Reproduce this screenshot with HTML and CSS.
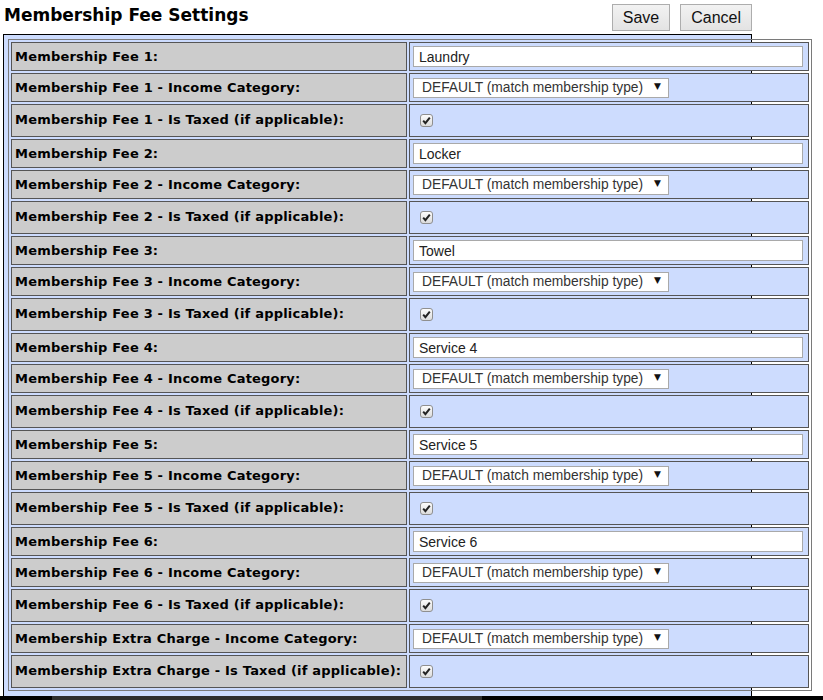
FILE: index.html
```html
<!DOCTYPE html>
<html lang="en">
<head>
    <meta charset="UTF-8">
    <title>Membership Fee Settings</title>
    <link rel="stylesheet" href="styles.css">
</head>
<body>
<div class="header">
    <h1>Membership Fee Settings</h1>
    <div class="buttons">
        <button type="button">Save</button>
        <button type="button">Cancel</button>
    </div>
</div>

<div class="panel">
    <table class="settings">
        <tr class="text-row">
            <td class="label">Membership Fee 1:</td>
            <td class="value"><input type="text" value="Laundry"></td>
        </tr>
        <tr class="text-row">
            <td class="label">Membership Fee 1 - Income Category:</td>
            <td class="value"><span class="select-wrap"><select><option>DEFAULT (match membership type)</option></select></span></td>
        </tr>
        <tr class="check-row">
            <td class="label">Membership Fee 1 - Is Taxed (if applicable):</td>
            <td class="value"><span class="checkbox"><svg viewBox="0 0 13 13" width="13" height="13"><path d="M3.2 6.6 L5.4 9.2 L9.8 3.6" fill="none" stroke="#222" stroke-width="2"/></svg></span></td>
        </tr>

        <tr class="text-row">
            <td class="label">Membership Fee 2:</td>
            <td class="value"><input type="text" value="Locker"></td>
        </tr>
        <tr class="text-row">
            <td class="label">Membership Fee 2 - Income Category:</td>
            <td class="value"><span class="select-wrap"><select><option>DEFAULT (match membership type)</option></select></span></td>
        </tr>
        <tr class="check-row">
            <td class="label">Membership Fee 2 - Is Taxed (if applicable):</td>
            <td class="value"><span class="checkbox"><svg viewBox="0 0 13 13" width="13" height="13"><path d="M3.2 6.6 L5.4 9.2 L9.8 3.6" fill="none" stroke="#222" stroke-width="2"/></svg></span></td>
        </tr>

        <tr class="text-row">
            <td class="label">Membership Fee 3:</td>
            <td class="value"><input type="text" value="Towel"></td>
        </tr>
        <tr class="text-row">
            <td class="label">Membership Fee 3 - Income Category:</td>
            <td class="value"><span class="select-wrap"><select><option>DEFAULT (match membership type)</option></select></span></td>
        </tr>
        <tr class="check-row">
            <td class="label">Membership Fee 3 - Is Taxed (if applicable):</td>
            <td class="value"><span class="checkbox"><svg viewBox="0 0 13 13" width="13" height="13"><path d="M3.2 6.6 L5.4 9.2 L9.8 3.6" fill="none" stroke="#222" stroke-width="2"/></svg></span></td>
        </tr>

        <tr class="text-row">
            <td class="label">Membership Fee 4:</td>
            <td class="value"><input type="text" value="Service 4"></td>
        </tr>
        <tr class="text-row">
            <td class="label">Membership Fee 4 - Income Category:</td>
            <td class="value"><span class="select-wrap"><select><option>DEFAULT (match membership type)</option></select></span></td>
        </tr>
        <tr class="check-row">
            <td class="label">Membership Fee 4 - Is Taxed (if applicable):</td>
            <td class="value"><span class="checkbox"><svg viewBox="0 0 13 13" width="13" height="13"><path d="M3.2 6.6 L5.4 9.2 L9.8 3.6" fill="none" stroke="#222" stroke-width="2"/></svg></span></td>
        </tr>

        <tr class="text-row">
            <td class="label">Membership Fee 5:</td>
            <td class="value"><input type="text" value="Service 5"></td>
        </tr>
        <tr class="text-row">
            <td class="label">Membership Fee 5 - Income Category:</td>
            <td class="value"><span class="select-wrap"><select><option>DEFAULT (match membership type)</option></select></span></td>
        </tr>
        <tr class="check-row">
            <td class="label">Membership Fee 5 - Is Taxed (if applicable):</td>
            <td class="value"><span class="checkbox"><svg viewBox="0 0 13 13" width="13" height="13"><path d="M3.2 6.6 L5.4 9.2 L9.8 3.6" fill="none" stroke="#222" stroke-width="2"/></svg></span></td>
        </tr>

        <tr class="text-row">
            <td class="label">Membership Fee 6:</td>
            <td class="value"><input type="text" value="Service 6"></td>
        </tr>
        <tr class="text-row">
            <td class="label">Membership Fee 6 - Income Category:</td>
            <td class="value"><span class="select-wrap"><select><option>DEFAULT (match membership type)</option></select></span></td>
        </tr>
        <tr class="check-row">
            <td class="label">Membership Fee 6 - Is Taxed (if applicable):</td>
            <td class="value"><span class="checkbox"><svg viewBox="0 0 13 13" width="13" height="13"><path d="M3.2 6.6 L5.4 9.2 L9.8 3.6" fill="none" stroke="#222" stroke-width="2"/></svg></span></td>
        </tr>

        <tr class="text-row">
            <td class="label">Membership Extra Charge - Income Category:</td>
            <td class="value"><span class="select-wrap"><select><option>DEFAULT (match membership type)</option></select></span></td>
        </tr>
        <tr class="check-row">
            <td class="label">Membership Extra Charge - Is Taxed (if applicable):</td>
            <td class="value"><span class="checkbox"><svg viewBox="0 0 13 13" width="13" height="13"><path d="M3.2 6.6 L5.4 9.2 L9.8 3.6" fill="none" stroke="#222" stroke-width="2"/></svg></span></td>
        </tr>
    </table>
</div>

<div class="footer-bar">
    <div class="seg-dark"></div>
    <div class="seg-mid"></div>
    <div class="seg-dark grow"></div>
</div>
</body>
</html>
```

FILE: styles.css
```css
body {
    margin: 0;
    padding: 0 3px;
    background-color: white;
    font-family: "DejaVu Sans", Verdana, sans-serif;
    color: black;
}

.header {
    width: 749px;
    height: 34px;
    display: flex;
    justify-content: space-between;
    align-items: flex-start;
}

h1 {
    margin: 0;
    padding: 5px 0 0 1px;
    font-size: 17px;
    font-weight: bold;
}

.buttons {
    display: flex;
    gap: 10px;
    padding-top: 4px;
}

.buttons button {
    height: 27px;
    padding: 0 10px;
    font-family: "Liberation Sans", Arial, sans-serif;
    font-size: 16px;
    color: #111;
    background: linear-gradient(#f2f2f2, #e3e3e3);
    border: 1px solid #adadad;
    border-radius: 0;
}

.panel {
    width: 739px;
    height: 700px;
    padding: 4px 4px 3px;
    background-color: #cddcfe;
    border: 1px solid black;
    border-bottom: none;
}

.settings {
    width: 804px;
    border: 1px solid #7a7a7a;
    border-spacing: 2px;
    table-layout: fixed;
}

.settings td {
    border: 1px solid #555;
    padding: 0 3px;
    vertical-align: middle;
}

.text-row td {
    height: 27px;
}

.check-row td {
    height: 31px;
}

.check-row .label {
    height: 29px;
    padding-bottom: 2px;
}

.label {
    width: 388px;
    background-color: #cccccc;
    font-size: 13px;
    font-weight: bold;
    letter-spacing: 0.2px;
}

.value {
    background-color: #cddcfe;
}

.value input {
    display: block;
    box-sizing: border-box;
    width: 390px;
    height: 21px;
    margin: 0;
    padding: 0 5px;
    border: 1px solid #a9a9a9;
    font-family: "Liberation Sans", Arial, sans-serif;
    font-size: 14px;
    color: #222;
    background: white;
}

.select-wrap {
    position: relative;
    display: inline-block;
    vertical-align: middle;
}

.select-wrap select {
    appearance: none;
    -webkit-appearance: none;
    box-sizing: border-box;
    width: 256px;
    height: 20px;
    margin: 0;
    padding: 0 0 0 8px;
    border: 1px solid #a9a9a9;
    border-radius: 0;
    background: white;
    font-family: "Liberation Sans", Arial, sans-serif;
    font-size: 13.8px;
    color: #333;
}

.select-wrap::after {
    content: "\25BC";
    position: absolute;
    right: 8px;
    top: 4px;
    font-family: "DejaVu Sans", sans-serif;
    font-size: 9px;
    color: #111;
    pointer-events: none;
}

.checkbox {
    display: block;
    box-sizing: border-box;
    width: 13px;
    height: 13px;
    margin-left: 7px;
    border: 1px solid #8f8f8f;
    border-radius: 3px;
    background: linear-gradient(#fcfcfc, #dcdcdc);
}

.checkbox svg {
    display: block;
    margin: -1px;
}

.footer-bar {
    position: fixed;
    left: 0;
    right: 0;
    bottom: 0;
    height: 4px;
    display: flex;
}

.seg-dark {
    width: 52px;
    background-color: black;
}

.seg-mid {
    width: 430px;
    background-color: #2e2e2e;
}

.grow {
    flex: 1;
}
```
